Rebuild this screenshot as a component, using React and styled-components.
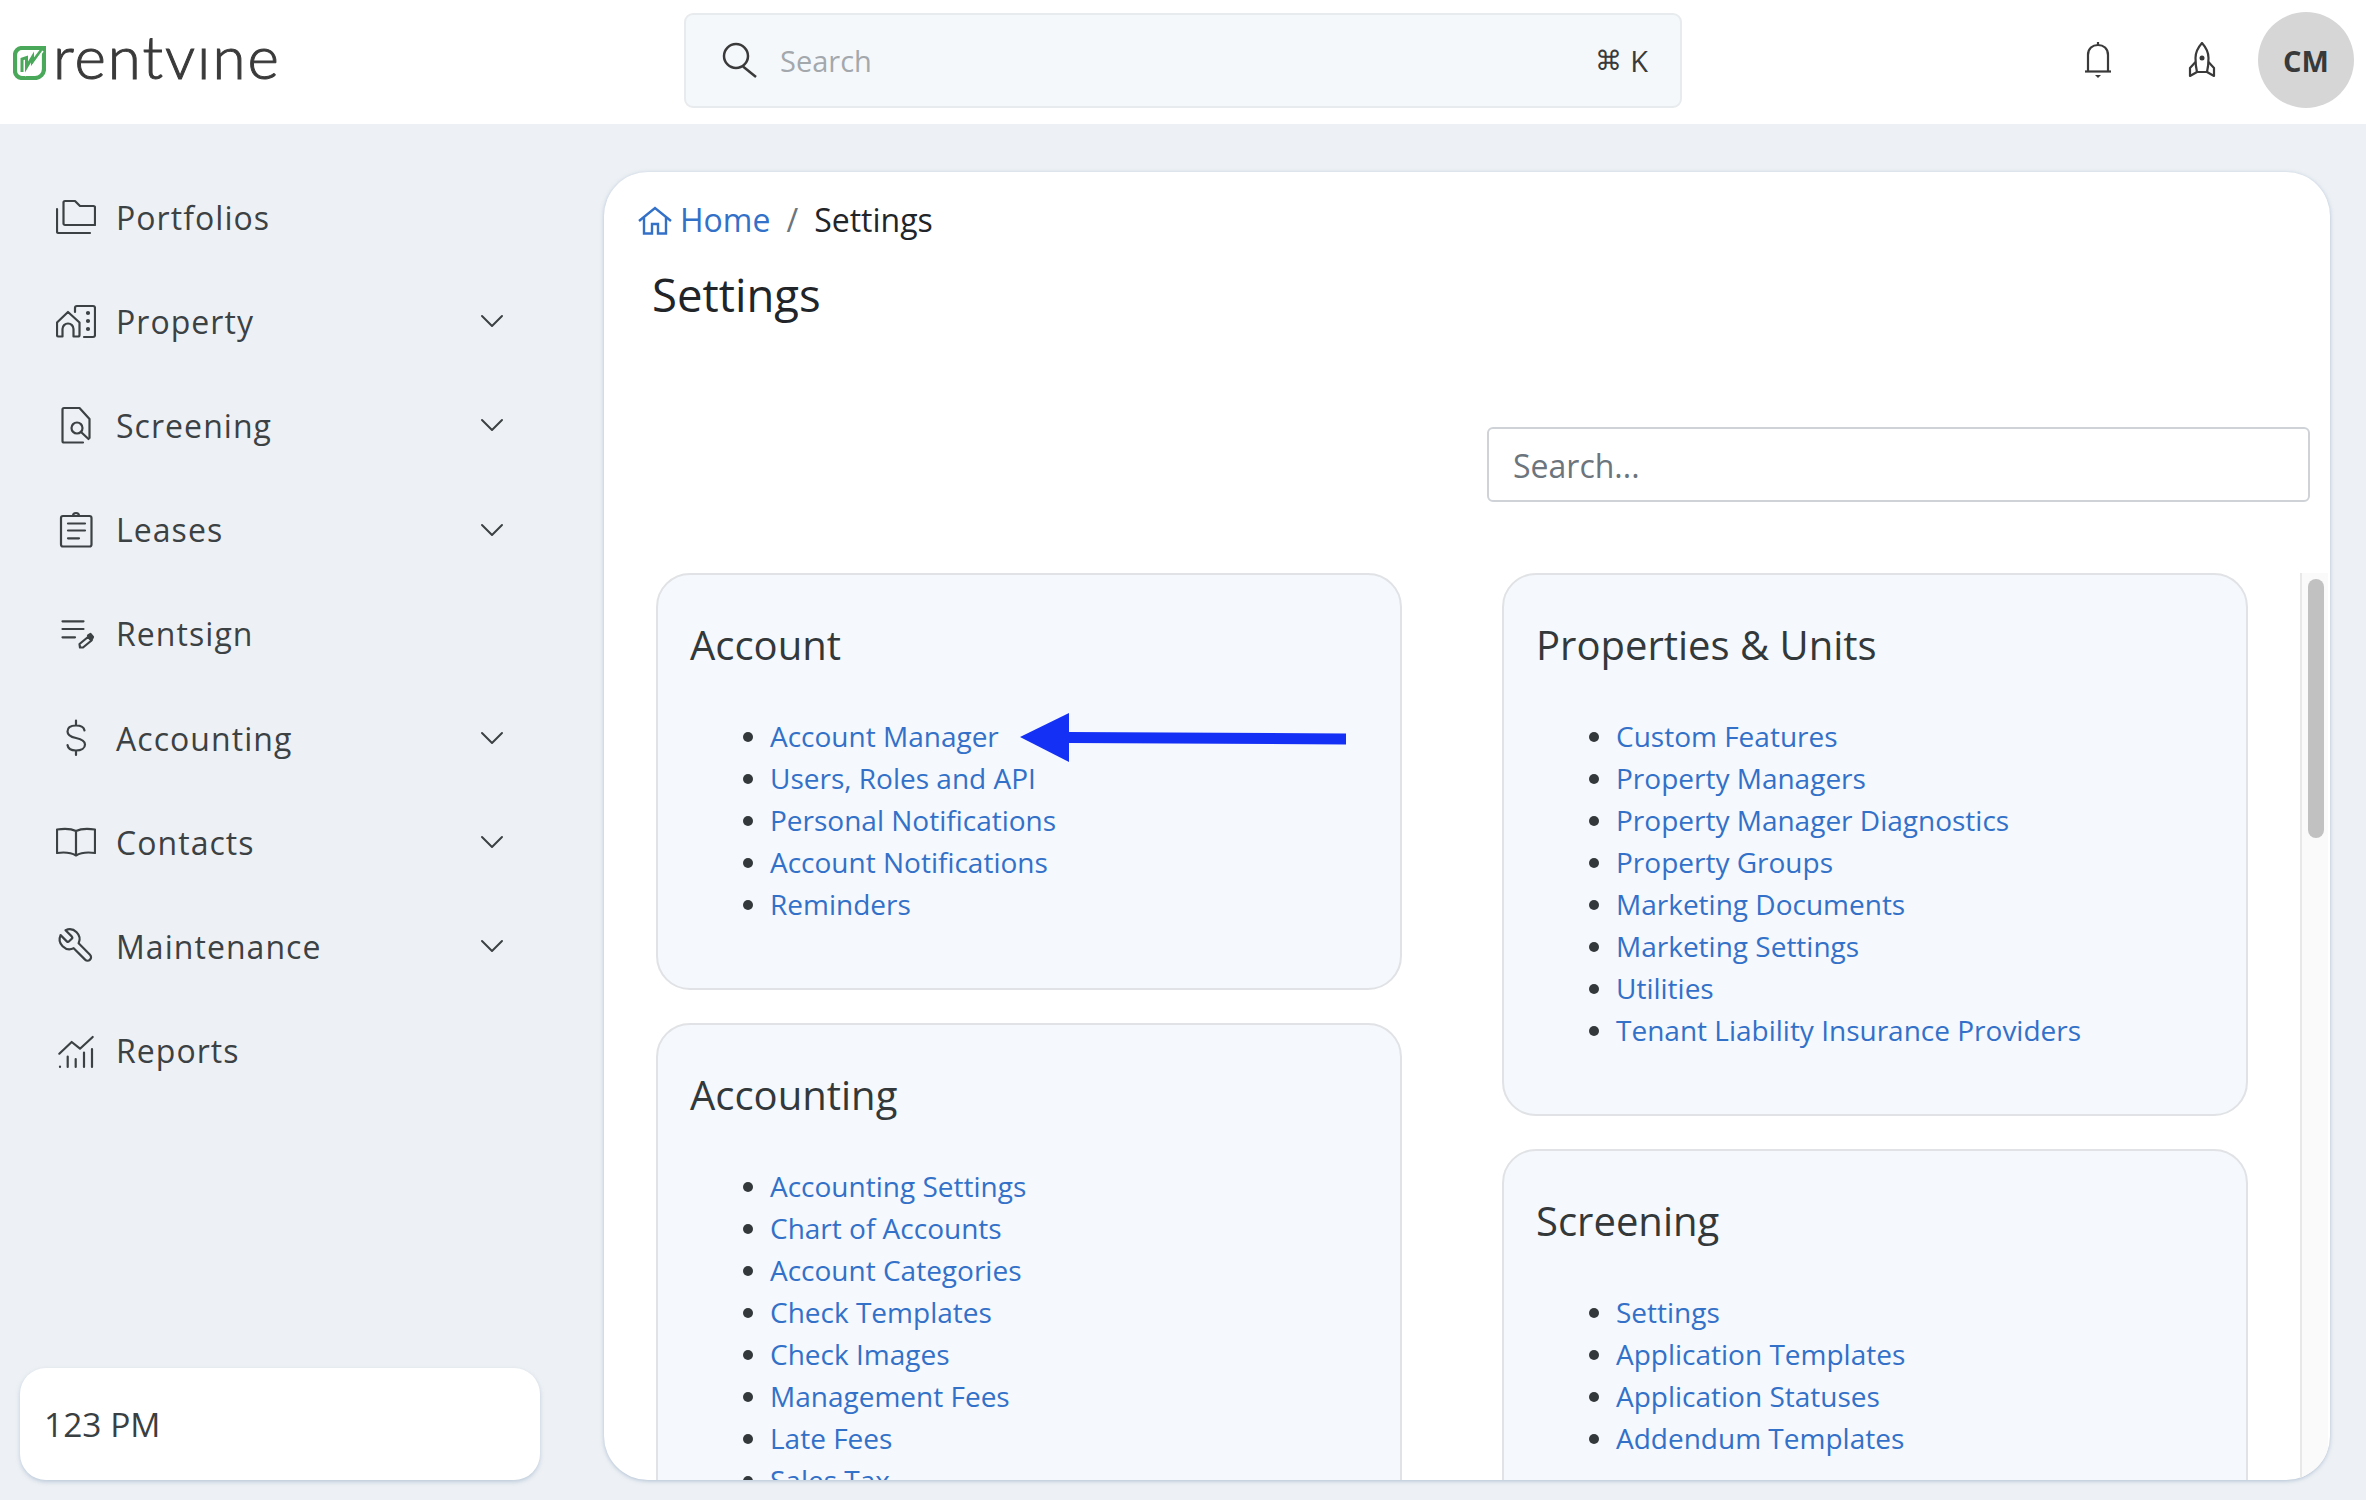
import React from 'react';
import styled, { createGlobalStyle } from 'styled-components';
import { ChevronDown } from 'lucide-react';

const GlobalStyle = createGlobalStyle`
  html, body {
    margin: 0;
    padding: 0;
    background: #edf1f5;
    font-family: "Open Sans", "Liberation Sans", sans-serif;
    color: #212529;
  }
  * { box-sizing: border-box; }
`;

const Page = styled.div`
  width: 2366px;
  height: 1500px;
  display: flex;
  flex-direction: column;
  overflow: hidden;
`;

const Header = styled.header`
  height: 124px;
  flex: none;
  display: flex;
  align-items: center;
  background: #fff;
  padding: 0 12px 4px 0;
`;

const Brand = styled.div`
  width: 684px;
  flex: none;
  display: flex;
  align-items: center;
  gap: 7px;
  padding-left: 13px;
`;

const BrandMark = styled.svg`
  flex: none;
  margin-top: 6px;
`;

const BrandName = styled.span`
  margin-bottom: 8px;
  font-family: Lato, "Open Sans", sans-serif;
  font-weight: 300;
  font-size: 60px;
  line-height: 60px;
  letter-spacing: 2px;
  color: #3a3a3a;
  -webkit-text-stroke: 1px #3a3a3a;
`;

const DotlessI = styled.span`
  display: inline-block;
  clip-path: inset(34% 0 0 0);
`;

const SearchBox = styled.div`
  width: 998px;
  height: 95px;
  flex: none;
  display: flex;
  align-items: center;
  padding: 0 32px 0 36px;
  background: #f5f8fb;
  border: 2px solid #e8ebee;
  border-radius: 9px;
`;

const SearchHint = styled.span`
  margin-left: 22px;
  font-size: 29px;
  color: #a3a8ad;
`;

const Shortcut = styled.span`
  margin-left: auto;
  font-size: 29px;
  color: #3a3a3a;
  display: flex;
  align-items: center;
  gap: 8px;
`;

const CommandGlyph = styled.span`
  font-family: "DejaVu Sans", sans-serif;
  font-size: 27px;
  font-weight: 300;
`;

const Actions = styled.div`
  margin-left: auto;
  display: flex;
  align-items: center;
`;

const ActionButton = styled.div`
  width: 104px;
  height: 96px;
  display: flex;
  align-items: center;
  justify-content: center;
  color: #3a3a3a;
`;

const Avatar = styled.div`
  width: 96px;
  height: 96px;
  margin-left: 4px;
  border-radius: 50%;
  background: #d6d6d6;
  display: flex;
  align-items: center;
  justify-content: center;
  font-size: 29px;
  font-weight: 700;
  color: #37393b;
`;

const Body = styled.div`
  flex: 1;
  min-height: 0;
  display: flex;
`;

const Sidebar = styled.aside`
  width: 604px;
  flex: none;
  display: flex;
  flex-direction: column;
  padding: 41px 64px 20px 20px;
`;

const Nav = styled.nav`
  display: flex;
  flex-direction: column;
`;

const NavItem = styled.div`
  height: 104.2px;
  display: flex;
  align-items: center;
  padding: 0 38px 0 36px;
  color: #3c4144;
`;

const NavLabel = styled.span`
  margin-left: 20px;
  font-size: 32px;
  letter-spacing: 1.05px;
`;

const Caret = styled(ChevronDown)`
  margin-left: auto;
  margin-right: -10px;
  width: 40px;
  height: 40px;
  stroke-width: 1.2;
`;

const TimeCard = styled.div`
  margin-top: auto;
  height: 112px;
  display: flex;
  align-items: center;
  padding-left: 24px;
  background: #fff;
  border-radius: 26px;
  box-shadow: 0 2px 4px rgba(150, 170, 195, 0.55);
  font-size: 33.5px;
  color: #3a3f42;
`;

const Panel = styled.main`
  width: 1726px;
  height: 1308px;
  margin-top: 48px;
  display: flex;
  flex-direction: column;
  background: #fff;
  border-radius: 44px;
  overflow: hidden;
  box-shadow: 0 1px 4px rgba(150, 170, 195, 0.7);
`;

const Crumbs = styled.div`
  display: flex;
  align-items: center;
  padding: 26px 0 0 34px;
  font-size: 32px;
  line-height: 44px;
  color: #212529;
`;

const CrumbLink = styled.a`
  margin-left: 8px;
  color: #3370c8;
`;

const CrumbSlash = styled.span`
  margin: 0 16px;
  color: #6c757d;
`;

const PageTitle = styled.h1`
  margin: 22px 0 0;
  padding-left: 48px;
  font-size: 45.5px;
  font-weight: 400;
  line-height: 60px;
  color: #212529;
`;

const FilterRow = styled.div`
  margin-top: 103px;
  padding-right: 20px;
  display: flex;
  justify-content: flex-end;
`;

const FilterInput = styled.input`
  width: 823px;
  height: 75px;
  padding: 2px 24px 0;
  background: #fff;
  border: 2px solid #cfd3d7;
  border-radius: 6px;
  font-family: inherit;
  font-size: 32px;
  outline: none;
  &::placeholder { color: #6c757d; opacity: 1; }
`;

const ScrollArea = styled.div`
  flex: 1;
  min-height: 0;
  margin-top: 71px;
  display: flex;
`;

const Columns = styled.div`
  display: grid;
  grid-template-columns: 746px 746px;
  column-gap: 100px;
  padding-left: 52px;
`;

const Column = styled.div`
  display: flex;
  flex-direction: column;
  gap: 33px;
`;

const Card = styled.section`
  position: relative;
  flex: none;
  padding: 45px 32px 63px;
  background: #f5f8fc;
  border: 2px solid #e0e2e5;
  border-radius: 34px;
`;

const CardTitle = styled.h2`
  margin: 0;
  font-size: 40px;
  font-weight: 400;
  line-height: 50px;
  color: #33383b;
`;

const LinkList = styled.ul`
  margin: 45px 0 0;
  padding-left: 80px;
  color: #33383b;
`;

const LinkItem = styled.li`
  font-size: 28px;
  line-height: 42px;
`;

const CardLink = styled.a`
  color: #3370c8;
`;

const Arrow = styled.svg`
  position: absolute;
  left: 362px;
  top: 138px;
`;

const ScrollTrack = styled.div`
  width: 28px;
  margin-left: auto;
  margin-right: 2px;
  padding: 6px 4px 0 6px;
  background: #fafafa;
  border-left: 2px solid #e8e8e8;
`;

const ScrollThumb = styled.div`
  width: 16px;
  height: 259px;
  border-radius: 8px;
  background: #c1c1c1;
`;

const LogoMark = () => (
  <BrandMark width="33" height="34" viewBox="0 0 33 34">
    <path d="M9 2H31V23a9 9 0 0 1-9 9H9A7 7 0 0 1 2 25V9A7 7 0 0 1 9 2Z" fill="none" stroke="#4aa85a" strokeWidth="4.2" />
    <path d="M9 26V13l4.500-1.500V21l6-10v5l9-12" fill="none" stroke="#4aa85a" strokeWidth="3" />
    <path d="M30 5 12 30" stroke="#fff" strokeWidth="1.6" />
  </BrandMark>
);

const SearchIcon = () => (
  <svg width="36" height="36" viewBox="0 0 36 36" fill="none" stroke="#3a3a3a" strokeWidth="2.500">
    <circle cx="14" cy="14" r="12" />
    <path d="M21 24.500 34 35" />
  </svg>
);

const BellIcon = () => (
  <svg width="28" height="38" viewBox="0 0 28 38" fill="none" stroke="currentColor" strokeWidth="2.200">
    <path d="M4 30V14C4 7.500 8.500 4 14 4s10 3.500 10 10v16" />
    <path d="M1 30.500H27" />
    <path d="M14 1v3" />
    <path d="M11 34h6l-3 3z" fill="currentColor" stroke="none" />
  </svg>
);

const RocketIcon = () => (
  <svg width="28" height="36" viewBox="0 0 28 36" fill="none" stroke="currentColor" strokeWidth="2.200" strokeLinejoin="round">
    <path d="M14 1c4.500 5 6.500 10 6.500 15 0 5-.5 10-1.500 14H9c-1-4-1.500-9-1.500-14 0-5 2-10 6.500-15Z" />
    <path d="M7.500 20 2 26v8l7-4M20.500 20 26 26v8l-7-4" />
    <circle cx="14" cy="16" r="2.500" fill="currentColor" stroke="none" />
  </svg>
);

const HomeIcon = () => (
  <svg width="34" height="29" viewBox="0 0 34 29" fill="none" stroke="#3370c8" strokeWidth="2.400">
    <path d="M1 15 17 2l16 13" />
    <path d="M6 11.500V27.500h8V18h6v9.500h8V11.500" />
  </svg>
);

const NavIcon = ({ children }) => (
  <svg width="40" height="40" viewBox="0 0 40 40" fill="none" stroke="currentColor" strokeWidth="2.200" strokeLinecap="round" strokeLinejoin="round" style={{ flex: 'none' }}>
    {children}
  </svg>
);

const icons = {
  portfolios: (
    <>
      <path d="M7.500 25V5.500A1.500 1.500 0 0 1 9 4h10l5 5h13.500A1.500 1.500 0 0 1 39 10.500V28H9a1.500 1.500 0 0 1-1.500-1.500Z" />
      <path d="M1 12v22.500A1.500 1.500 0 0 0 2.500 36H34" />
    </>
  ),
  property: (
    <>
      <path d="M1 34V21.500L12 11l11.500 10.500V34a1.500 1.500 0 0 1-1.500 1.500h-4.500V28a5.500 5.500 0 0 0-11 0v7.500H2.500A1.500 1.500 0 0 1 1 34Z" />
      <path d="M19 11V7a2 2 0 0 1 2-2h16a2 2 0 0 1 2 2v27a2 2 0 0 1-2 2h-9" />
      <circle cx="32" cy="12" r="1" fill="currentColor" />
      <circle cx="32" cy="20" r="1" fill="currentColor" />
      <circle cx="32" cy="28" r="1" fill="currentColor" />
    </>
  ),
  screening: (
    <>
      <path d="M27 37.500H8A1.500 1.500 0 0 1 6.500 36V4.500A1.500 1.500 0 0 1 8 3h15.500L33.500 14V33" />
      <circle cx="21" cy="23" r="5.500" />
      <path d="M25 27l7.500 7" />
    </>
  ),
  leases: (
    <>
      <rect x="5" y="6" width="30.500" height="30.500" rx="2" />
      <path d="M17 6a3 3 0 0 1 6 0" />
      <path d="M12 13.500h17M12 20.500h17M12 28.300h11" />
    </>
  ),
  rentsign: (
    <>
      <path d="M6.500 7.300h21M6.500 15h21M6.500 23.300h12.500" />
      <path d="M24 33.500l-.500-3.500 8.500-7 3.500 3.500-8.500 7Z" />
      <path d="M32 21.500l2.500-1.500 2.500 3-1.500 3Z" fill="currentColor" />
    </>
  ),
  accounting: (
    <path d="M20 2.500V7.500M20 32.500V37M28.500 12.500C28 9.500 25 7.500 20 7.500 14.500 7.500 11.500 10 11.500 13.500 11.500 17.500 15 19 20 20 25 21 29 22.500 29 26.500 29 30 25.500 32.500 20 32.500 15 32.500 12 30.500 11.500 27" />
  ),
  contacts: (
    <path d="M20 9C16 7 8 6.500 1 7.500V31c7-1 14-.5 19 2.500 5-3 12-3.500 19-2.500V7.500C32 6.500 24 7 20 9ZM20 9V33" />
  ),
  maintenance: (
    <g transform="translate(40 0) scale(-1.65 1.65)" strokeWidth="1.33">
      <path d="M14.700 6.300a1 1 0 0 0 0 1.400l1.600 1.600a1 1 0 0 0 1.400 0l3.770-3.770a6 6 0 0 1-7.940 7.940l-6.910 6.910a2.120 2.120 0 0 1-3-3l6.910-6.910a6 6 0 0 1 7.940-7.940l-3.760 3.760z" />
    </g>
  ),
  reports: (
    <>
      <path d="M3.300 22.700 15.700 11 24 17.700 36.700 6" />
      <path d="M4 35.500v.5M11.700 25.500V36M19.700 28V36M28 21.500V36M36 18V36" />
    </>
  ),
};

const navItems = [
  { label: 'Portfolios', icon: 'portfolios' },
  { label: 'Property', icon: 'property', caret: true },
  { label: 'Screening', icon: 'screening', caret: true },
  { label: 'Leases', icon: 'leases', caret: true },
  { label: 'Rentsign', icon: 'rentsign' },
  { label: 'Accounting', icon: 'accounting', caret: true },
  { label: 'Contacts', icon: 'contacts', caret: true },
  { label: 'Maintenance', icon: 'maintenance', caret: true },
  { label: 'Reports', icon: 'reports' },
];

const leftCards = [
  {
    title: 'Account',
    arrow: true,
    links: ['Account Manager', 'Users, Roles and API', 'Personal Notifications', 'Account Notifications', 'Reminders'],
  },
  {
    title: 'Accounting',
    links: ['Accounting Settings', 'Chart of Accounts', 'Account Categories', 'Check Templates', 'Check Images', 'Management Fees', 'Late Fees', 'Sales Tax'],
  },
];

const rightCards = [
  {
    title: 'Properties & Units',
    links: ['Custom Features', 'Property Managers', 'Property Manager Diagnostics', 'Property Groups', 'Marketing Documents', 'Marketing Settings', 'Utilities', 'Tenant Liability Insurance Providers'],
  },
  {
    title: 'Screening',
    links: ['Settings', 'Application Templates', 'Application Statuses', 'Addendum Templates'],
  },
];

const SettingsCard = ({ title, links, arrow }) => (
  <Card>
    <CardTitle>{title}</CardTitle>
    <LinkList>
      {links.map(link => (
        <LinkItem key={link}>
          <CardLink>{link}</CardLink>
        </LinkItem>
      ))}
    </LinkList>
    {arrow && (
      <Arrow width="326" height="50" viewBox="0 0 326 50">
        <path d="M0 24 49 0V49Z" fill="#1530f5" />
        <path d="M49 19 326 20.500V31.500L49 30Z" fill="#1530f5" />
      </Arrow>
    )}
  </Card>
);

const App = () => (
  <Page>
    <GlobalStyle />
    <Header>
      <Brand>
        <LogoMark />
        <BrandName>rentv<DotlessI>i</DotlessI>ne</BrandName>
      </Brand>
      <SearchBox>
        <SearchIcon />
        <SearchHint>Search</SearchHint>
        <Shortcut><CommandGlyph>⌘</CommandGlyph> K</Shortcut>
      </SearchBox>
      <Actions>
        <ActionButton><BellIcon /></ActionButton>
        <ActionButton><RocketIcon /></ActionButton>
        <Avatar>CM</Avatar>
      </Actions>
    </Header>
    <Body>
      <Sidebar>
        <Nav>
          {navItems.map(item => (
            <NavItem key={item.label}>
              <NavIcon>{icons[item.icon]}</NavIcon>
              <NavLabel>{item.label}</NavLabel>
              {item.caret && <Caret />}
            </NavItem>
          ))}
        </Nav>
        <TimeCard>123 PM</TimeCard>
      </Sidebar>
      <Panel>
        <Crumbs>
          <HomeIcon />
          <CrumbLink>Home</CrumbLink>
          <CrumbSlash>/</CrumbSlash>
          <span>Settings</span>
        </Crumbs>
        <PageTitle>Settings</PageTitle>
        <FilterRow>
          <FilterInput placeholder="Search..." />
        </FilterRow>
        <ScrollArea>
          <Columns>
            <Column>
              {leftCards.map(card => <SettingsCard key={card.title} {...card} />)}
            </Column>
            <Column>
              {rightCards.map(card => <SettingsCard key={card.title} {...card} />)}
            </Column>
          </Columns>
          <ScrollTrack>
            <ScrollThumb />
          </ScrollTrack>
        </ScrollArea>
      </Panel>
    </Body>
  </Page>
);

export default App;
